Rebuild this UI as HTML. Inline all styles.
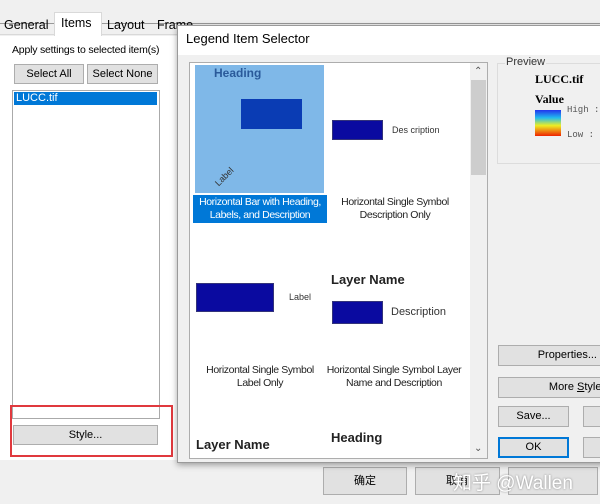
<!DOCTYPE html>
<html><head><style>
*{margin:0;padding:0;box-sizing:border-box}
body{width:600px;height:504px;overflow:hidden;background:#f0f0f0;font-family:"Liberation Sans",sans-serif;font-size:11px;color:#000;position:relative}
.a{position:absolute}
.btn{position:absolute;background:#e1e1e1;border:1px solid #adadad;text-align:center;font-size:11px}
.cap{position:absolute;text-align:center;font-size:10.5px;line-height:13px;color:#222;letter-spacing:-0.4px}
.db{position:absolute;background:#0a0aa0;border:1px solid #33337a}
</style></head><body>
<div class="a" style="left:0;top:14px;width:600px;height:10px;background:#f0f0f0;border-bottom:1px solid #999"></div>
<div class="a" style="left:0;top:14px;width:600px;height:21px;border-bottom:1px solid #d9d9d9"></div>
<div class="a" style="left:4px;top:18px;font-size:12.5px">General</div>
<div class="a" style="left:54px;top:12px;width:48px;height:24px;background:#fff;border:1px solid #d9d9d9;border-bottom:none"></div>
<div class="a" style="left:61px;top:16px;font-size:12.5px">Items</div>
<div class="a" style="left:107px;top:18px;font-size:12.5px">Layout</div>
<div class="a" style="left:157px;top:18px;font-size:12.5px">Frame</div>
<div class="a" style="left:52px;top:36px;width:548px;height:424px;background:#fff"></div>
<div class="a" style="left:0;top:36px;width:176px;height:424px;background:#fff"></div>
<div class="a" style="left:12px;top:44px;font-size:10.5px;letter-spacing:-0.2px">Apply settings to selected item(s)</div>
<div class="btn" style="left:14px;top:64px;width:70px;height:20px;line-height:18px">Select All</div>
<div class="btn" style="left:87px;top:64px;width:71px;height:20px;line-height:18px">Select None</div>
<div class="a" style="left:12px;top:90px;width:148px;height:329px;border:1px solid #aaa;background:#fff"></div>
<div class="a" style="left:14px;top:92px;width:143px;height:13px;background:#0078d7;color:#fff;font-size:11px;line-height:13px;padding-left:2px">LUCC.tif</div>
<div class="btn" style="left:13px;top:425px;width:145px;height:20px;line-height:18px">Style...</div>
<div class="a" style="left:10px;top:405px;width:163px;height:52px;border:2px solid #e0393e"></div>
<div class="btn" style="left:323px;top:467px;width:84px;height:28px;line-height:26px;font-family:'Liberation Sans','Noto Sans CJK SC',sans-serif">确定</div>
<div class="btn" style="left:415px;top:467px;width:85px;height:28px;line-height:26px;text-align:left;padding-left:30px;font-family:'Liberation Sans','Noto Sans CJK SC',sans-serif">取消</div>
<div class="btn" style="left:508px;top:467px;width:90px;height:28px"></div>
<div class="a" style="left:453px;top:468px;font-size:19px;color:#fff;text-shadow:0 0 2px #888;font-family:'Liberation Sans','Noto Sans CJK SC',sans-serif">知乎 @Wallen</div>
<div class="a" style="left:177px;top:25px;width:430px;height:438px;background:#f0f0f0;border:1px solid #9a9a9a;box-shadow:0 2px 6px rgba(0,0,0,.35)"></div>
<div class="a" style="left:178px;top:26px;width:422px;height:29px;background:#fff"></div>
<div class="a" style="left:186px;top:31px;font-size:13px">Legend Item Selector</div>
<div class="a" style="left:189px;top:62px;width:299px;height:397px;background:#fff;border:1px solid #adadad"></div>
<div class="a" style="left:470px;top:63px;width:17px;height:395px;background:#f0f0f0"></div>
<div class="a" style="left:471px;top:80px;width:15px;height:95px;background:#cdcdcd"></div>
<div class="a" style="left:474px;top:66px;font-size:10px;color:#555">&#8963;</div>
<div class="a" style="left:474px;top:443px;font-size:10px;color:#555">&#8964;</div>
<div class="a" style="left:195px;top:65px;width:129px;height:128px;background:#7fb8e8"></div>
<div class="a" style="left:214px;top:66px;font-size:12px;font-weight:bold;color:#2a5a9a">Heading</div>
<div class="a" style="left:241px;top:99px;width:61px;height:30px;background:#0a3cb4"></div>
<div class="a" style="left:220px;top:178px;font-size:9px;color:#333;transform:rotate(-45deg);transform-origin:left bottom">Label</div>
<div class="a" style="left:193px;top:195px;width:134px;height:28px;background:#0078d7"></div>
<div class="cap" style="left:193px;top:196px;width:134px;color:#fff">Horizontal Bar with Heading, Labels, and Description</div>
<div class="db" style="left:332px;top:120px;width:51px;height:20px"></div>
<div class="a" style="left:392px;top:125px;font-size:9px;color:#333">Des cription</div>
<div class="cap" style="left:330px;top:196px;width:130px">Horizontal Single Symbol Description Only</div>
<div class="a" style="left:331px;top:272px;font-size:13px;font-weight:bold;color:#222">Layer Name</div>
<div class="db" style="left:196px;top:283px;width:78px;height:29px"></div>
<div class="a" style="left:289px;top:292px;font-size:9px;color:#333">Label</div>
<div class="db" style="left:332px;top:301px;width:51px;height:23px"></div>
<div class="a" style="left:391px;top:306px;font-size:11px;color:#333">Description</div>
<div class="cap" style="left:195px;top:364px;width:130px">Horizontal Single Symbol Label Only</div>
<div class="cap" style="left:326px;top:364px;width:136px">Horizontal Single Symbol Layer Name and Description</div>
<div class="a" style="left:196px;top:437px;font-size:13px;font-weight:bold;color:#222">Layer Name</div>
<div class="a" style="left:331px;top:430px;font-size:13px;font-weight:bold;color:#222">Heading</div>
<div class="a" style="left:497px;top:63px;width:110px;height:101px;border:1px solid #dcdcdc"></div>
<div class="a" style="left:505px;top:56px;background:#f0f0f0;padding:0 1px;font-size:11px;color:#333">Preview</div>
<div class="a" style="left:535px;top:72px;font-family:'Liberation Serif',serif;font-weight:bold;font-size:12px">LUCC.tif</div>
<div class="a" style="left:535px;top:92px;font-family:'Liberation Serif',serif;font-weight:bold;font-size:12px">Value</div>
<div class="a" style="left:535px;top:110px;width:26px;height:26px;background:linear-gradient(#2233ee,#22bbee 30%,#eeee22 60%,#ee2200)"></div>
<div class="a" style="left:567px;top:105px;font-family:'Liberation Mono',monospace;font-size:9px;color:#555">High :</div>
<div class="a" style="left:567px;top:130px;font-family:'Liberation Mono',monospace;font-size:9px;color:#555">Low :</div>
<div class="btn" style="left:498px;top:345px;width:110px;height:21px;line-height:19px;text-align:right;padding-right:10px">Properties...</div>
<div class="btn" style="left:498px;top:377px;width:110px;height:21px;line-height:19px;text-align:right;padding-right:0">More <u>S</u>tyles</div>
<div class="btn" style="left:498px;top:406px;width:71px;height:21px;line-height:19px">Save...</div>
<div class="btn" style="left:583px;top:406px;width:30px;height:21px"></div>
<div class="btn" style="left:498px;top:437px;width:71px;height:21px;line-height:17px;border:2px solid #0078d7">OK</div>
<div class="btn" style="left:583px;top:437px;width:30px;height:21px"></div>
</body></html>
